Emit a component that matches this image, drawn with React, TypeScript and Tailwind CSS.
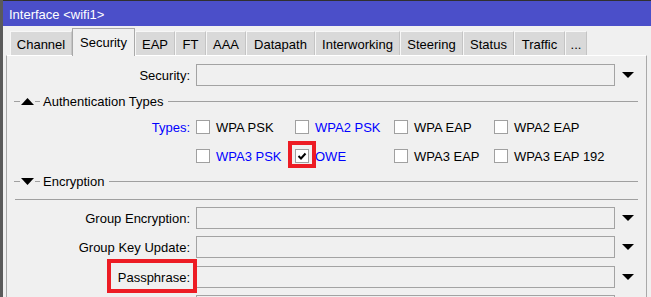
import React from 'react';

const tabs: { label: string; w: number; active?: boolean }[] = [
  { label: 'Channel', w: 62 },
  { label: 'Security', w: 63, active: true },
  { label: 'EAP', w: 40 },
  { label: 'FT', w: 31 },
  { label: 'AAA', w: 40 },
  { label: 'Datapath', w: 69 },
  { label: 'Interworking', w: 85 },
  { label: 'Steering', w: 63 },
  { label: 'Status', w: 51 },
  { label: 'Traffic', w: 51 },
  { label: '...', w: 22 },
];

function DropArrow() {
  return (
    <svg width="12" height="6" viewBox="0 0 12 6" className="ml-[7px] shrink-0">
      <path d="M0 0 H12 L6 6 Z" fill="#000" />
    </svg>
  );
}

function Field({ label, highlight }: { label: string; highlight?: boolean }) {
  return (
    <div className="relative flex items-center h-[22px]">
      <div className="w-[183px] text-right text-[#000]">{label}</div>
      <div className="ml-[6px] w-[419px] h-[22px] border border-[#a3a3a3] bg-[#f0f0f0]" />
      <DropArrow />
      {highlight && (
        <div className="absolute left-[100px] top-[-7px] w-[90px] h-[34px] border-4 border-[#ed1c24]" />
      )}
    </div>
  );
}

function Section({ label, open }: { label: string; open?: boolean }) {
  return (
    <div className="flex items-center h-[14px] pl-[7px] pr-[8px]">
      <div className="w-[6px] h-px bg-[#a0a0a0]" />
      <svg width="13" height="7" viewBox="0 0 13 7" className="ml-[1px]">
        {open ? <path d="M0 0 H13 L6.5 7 Z" fill="#000" /> : <path d="M0 7 H13 L6.5 0 Z" fill="#000" />}
      </svg>
      <div className="ml-[1px] w-[5px] h-px bg-[#a0a0a0]" />
      <span className="ml-[3px] text-[#000]">{label}</span>
      <div className="ml-[5px] flex-1 h-px bg-[#a0a0a0]" />
    </div>
  );
}

function Check({ label, blue, checked, highlight, w }: { label: string; blue?: boolean; checked?: boolean; highlight?: boolean; w: string }) {
  return (
    <div className={`flex items-center ${w}`}>
      <div className="relative w-[14px] h-[14px] border border-[#a0a0a0] bg-white flex items-center justify-center shrink-0">
        {checked && (
          <svg width="10" height="10" viewBox="0 0 10 10">
            <path d="M1.5 5 L4 7.5 L8.5 2.5" stroke="#000" strokeWidth="2" fill="none" />
          </svg>
        )}
        {highlight && (
          <div className="absolute left-[-8px] top-[-9px] w-[28px] h-[27px] border-4 border-[#ed1c24]" />
        )}
      </div>
      <span className={`ml-[6px] whitespace-nowrap ${blue ? 'text-[#0000ff]' : 'text-[#000]'}`}>{label}</span>
    </div>
  );
}

export default function App() {
  return (
    <div className="w-[651px] h-[297px] overflow-hidden flex bg-[#f0f0f0] text-[13px] leading-none" style={{ fontFamily: '"Liberation Sans", Arial, sans-serif' }}>
      <div className="w-[3px] bg-[#5a5a5a] shrink-0" />
      <div className="flex-1 flex flex-col min-w-0">
        <div className="h-[26px] border-t border-[#303030] bg-[#4b4fc9] text-white flex items-center pl-[6px] pt-[2px] shrink-0">
          Interface &lt;wifi1&gt;
        </div>
        <div className="h-[29px] flex items-end pl-[7px] shrink-0">
          {tabs.map(t =>
            t.active ? (
              <div
                key={t.label}
                style={{ width: t.w }}
                className="relative z-10 h-[28px] -mb-px bg-[#f0f0f0] border-l border-t border-r border-[#a9a9a9] flex items-center justify-center pb-[1px]"
              >
                {t.label}
              </div>
            ) : (
              <div
                key={t.label}
                style={{ width: t.w }}
                className="h-[24px] bg-[#d9d9d9] border-l border-t border-r border-l-[#f7f7f7] border-t-[#f7f7f7] border-r-[#c4c4c4] flex items-center justify-center pt-[1px]"
              >
                {t.label}
              </div>
            )
          )}
        </div>
        <div className="flex-1 ml-[3px] mr-[4px] border-l border-[#a9a9a9] border-t border-t-white border-r border-r-[#a9a9a9] flex flex-col">
          <div className="mt-[8px]">
            <Field label="Security:" />
          </div>
          <div className="mt-[8px]">
            <Section label="Authentication Types" />
          </div>
          <div className="mt-[8px] flex items-center h-[22px]">
            <div className="w-[183px] text-right text-[#0000ff]">Types:</div>
            <div className="ml-[6px] flex">
              <Check w="w-[99px]" label="WPA PSK" />
              <Check w="w-[99px]" label="WPA2 PSK" blue />
              <Check w="w-[100px]" label="WPA EAP" />
              <Check w="w-[120px]" label="WPA2 EAP" />
            </div>
          </div>
          <div className="mt-[7px] flex items-center h-[22px]">
            <div className="w-[183px]" />
            <div className="ml-[6px] flex">
              <Check w="w-[99px]" label="WPA3 PSK" blue />
              <Check w="w-[99px]" label="OWE" blue checked highlight />
              <Check w="w-[100px]" label="WPA3 EAP" />
              <Check w="w-[120px]" label="WPA3 EAP 192" />
            </div>
          </div>
          <div className="mt-[7px]">
            <Section label="Encryption" open />
          </div>
          <div className="mt-[11px] ml-[8px] mr-[8px] h-px bg-[#a0a0a0]" />
          <div className="mt-[7px]">
            <Field label="Group Encryption:" />
          </div>
          <div className="mt-[7px]">
            <Field label="Group Key Update:" />
          </div>
          <div className="mt-[8px]">
            <Field label="Passphrase:" highlight />
          </div>
          <div className="mt-[7px] flex">
            <div className="ml-[189px] w-[419px] h-[22px] border border-[#a3a3a3]" />
          </div>
        </div>
      </div>
    </div>
  );
}
